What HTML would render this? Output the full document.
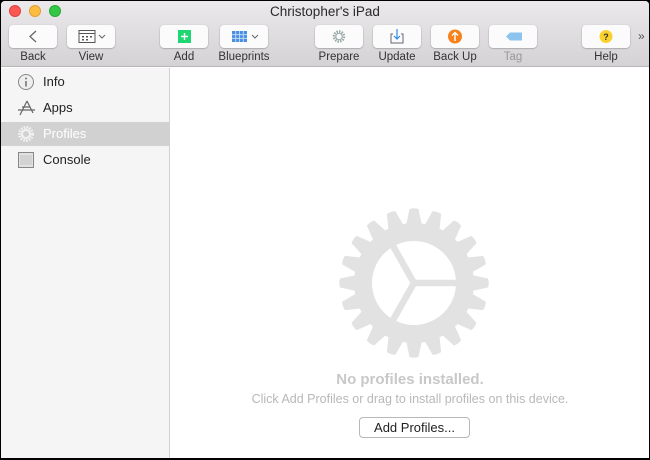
<!DOCTYPE html>
<html><head><meta charset="utf-8"><style>
*{box-sizing:border-box;margin:0;padding:0}
body{width:650px;height:460px;overflow:hidden;font-family:"Liberation Sans",sans-serif;background:#000;position:relative}
.win{position:absolute;left:1px;top:1px;width:648px;height:457px;background:#fff;overflow:hidden;border-radius:4px 4px 0 0}
.tb{position:absolute;left:0;top:0;width:648px;height:66px;background:linear-gradient(#ebe9eb,#d4d2d4);border-bottom:1px solid #b8b6b8}
.dot{position:absolute;top:4px;width:12px;height:12px;border-radius:50%}
.title{position:absolute;top:3px;left:0;width:648px;text-align:center;font-size:13.5px;color:#2a2a2a}
.btn{position:absolute;top:24px;width:48px;height:23px;background:#fbfbfb;border-radius:4px;box-shadow:0 0.5px 1.5px rgba(0,0,0,.35)}
.lbl{position:absolute;top:50px;font-size:11.5px;color:#333;text-align:center;width:80px}
.side{position:absolute;left:0;top:67px;width:169px;height:390px;background:#f5f5f5;border-right:1px solid #d0d0d0}
.row{position:absolute;left:0;width:169px;height:24px;font-size:13px;color:#222;line-height:24px;padding-left:42px}
.sel{background:#d1d1d1;color:#fff}
</style></head><body><div class="win">
<div class="tb">
<div class="dot" style="left:8px;background:#fc5753;border:0.5px solid #de4240"></div>
<div class="dot" style="left:28px;background:#fdbc40;border:0.5px solid #dea036"></div>
<div class="dot" style="left:48px;background:#33c748;border:0.5px solid #27aa35"></div>
<div class="title">Christopher's iPad</div>

<div class="btn" style="left:8px"><svg width="48" height="23"><path d="M27 6 L21 11.5 L27 17" fill="none" stroke="#666" stroke-width="1.3"/></svg></div>
<div class="lbl" style="left:-8px">Back</div>
<div class="btn" style="left:66px"><svg width="48" height="23"><rect x="12" y="5.5" width="16" height="12" fill="none" stroke="#555"/><line x1="12" y1="8.5" x2="28" y2="8.5" stroke="#555"/><g fill="#555"><rect x="15" y="11" width="2" height="1.5"/><rect x="19" y="11" width="2" height="1.5"/><rect x="23" y="11" width="2" height="1.5"/><rect x="15" y="14" width="2" height="1.5"/><rect x="19" y="14" width="2" height="1.5"/></g><path d="M32 10 L35 13 L38 10" fill="none" stroke="#666"/></svg></div>
<div class="lbl" style="left:50px">View</div>
<div class="btn" style="left:159px"><svg width="48" height="23"><rect x="18" y="5" width="13" height="13" fill="#1ed773"/><path d="M24.5 8v7M21 11.5h7" stroke="#fff" stroke-width="1.4"/></svg></div>
<div class="lbl" style="left:143px">Add</div>
<div class="btn" style="left:219px"><svg width="48" height="23"><rect x="12" y="6" width="15" height="11" fill="#4a90e2"/><g stroke="#cfe3fa" stroke-width="0.8"><path d="M12 9.7h15M12 13.3h15M15.75 6v11M19.5 6v11M23.25 6v11"/></g><path d="M32 10 L35 13 L38 10" fill="none" stroke="#666"/></svg></div>
<div class="lbl" style="left:203px">Blueprints</div>
<div class="btn" style="left:314px"><svg width="48" height="23"><circle cx="24" cy="11.5" r="5" fill="none" stroke="#9aa" stroke-width="2.5" stroke-dasharray="1.5 1.1"/><circle cx="24" cy="11.5" r="3.2" fill="none" stroke="#9aa"/></svg></div>
<div class="lbl" style="left:298px">Prepare</div>
<div class="btn" style="left:372px"><svg width="48" height="23"><path d="M20 9h-2v9h12V9h-2" fill="none" stroke="#667"/><path d="M24 4v10M21 11l3 3 3-3" fill="none" stroke="#2e8ae6" stroke-width="1.2"/></svg></div>
<div class="lbl" style="left:356px">Update</div>
<div class="btn" style="left:430px"><svg width="48" height="23"><circle cx="24" cy="11.5" r="7" fill="#f7821b"/><path d="M24 16V7.5M21 10.5l3-3 3 3" fill="none" stroke="#fff" stroke-width="1.4"/></svg></div>
<div class="lbl" style="left:414px">Back Up</div>
<div class="btn" style="left:488px"><svg width="48" height="23"><path d="M17 11.5l4-4h12v8H21z" fill="#8cc4ef"/></svg></div>
<div class="lbl" style="left:472px;color:#999">Tag</div>
<div class="btn" style="left:581px"><svg width="48" height="23"><circle cx="24" cy="11.5" r="6.5" fill="#fbd22c"/><text x="24" y="15" font-size="9" font-weight="bold" text-anchor="middle" fill="#333" font-family="Liberation Sans">?</text></svg></div>
<div class="lbl" style="left:565px">Help</div>
<div style="position:absolute;left:637px;top:28px;font-size:12px;color:#555">»</div>
</div>

<div class="side">
<div class="row" style="top:2px"><svg style="position:absolute;left:16px;top:3px" width="18" height="18"><circle cx="9" cy="9" r="7.5" fill="#eee" stroke="#888"/><circle cx="9" cy="5.5" r="1" fill="#777"/><path d="M9 8v5.5" stroke="#777" stroke-width="1.6"/></svg>Info</div>
<div class="row" style="top:28px"><svg style="position:absolute;left:15px;top:3px" width="20" height="18"><path d="M4 16L11 2M11 2L17 14M2 11h17M6 8h8" fill="none" stroke="#666" stroke-width="1.2"/></svg>Apps</div>
<div class="row sel" style="top:54px"><svg style="position:absolute;left:16px;top:3px" width="18" height="18"><circle cx="9" cy="9" r="6.5" fill="none" stroke="#f2f2f2" stroke-width="3" stroke-dasharray="1.6 1.2"/><circle cx="9" cy="9" r="5" fill="#f2f2f2"/><circle cx="9" cy="9" r="3" fill="#d1d1d1"/></svg>Profiles</div>
<div class="row" style="top:80px"><svg style="position:absolute;left:16px;top:3px" width="18" height="18"><rect x="1.5" y="1.5" width="15" height="15" fill="#e2e2e2" stroke="#888"/><g stroke="#bbb" stroke-width="0.7"><path d="M3 5h12M3 7h12M3 9h12M3 11h12M3 13h12"/></g></svg>Console</div>
</div>

<svg style="position:absolute;left:337px;top:206px" width="152" height="152" viewBox="-76 -76 152 152">
<g fill="#e2e2e2">
<circle r="60"/>
<g id="t"><path d="M-4.5 -74 Q0 -75.5 4.5 -74 L8.5 -55 L-8.5 -55 Z"/></g>
<use href="#t" transform="rotate(18)"/><use href="#t" transform="rotate(36)"/><use href="#t" transform="rotate(54)"/><use href="#t" transform="rotate(72)"/><use href="#t" transform="rotate(90)"/><use href="#t" transform="rotate(108)"/><use href="#t" transform="rotate(126)"/><use href="#t" transform="rotate(144)"/><use href="#t" transform="rotate(162)"/><use href="#t" transform="rotate(180)"/><use href="#t" transform="rotate(198)"/><use href="#t" transform="rotate(216)"/><use href="#t" transform="rotate(234)"/><use href="#t" transform="rotate(252)"/><use href="#t" transform="rotate(270)"/><use href="#t" transform="rotate(288)"/><use href="#t" transform="rotate(306)"/><use href="#t" transform="rotate(324)"/><use href="#t" transform="rotate(342)"/>
</g>
<circle r="42" fill="#fff"/>
<g stroke="#e2e2e2" stroke-width="6.5" stroke-linecap="round"><path d="M0 0L42 0M0 0L-21 -37M0 0L-21 37"/></g>
</svg>

<div style="position:absolute;left:170px;top:370px;width:478px;text-align:center;font-size:15px;font-weight:bold;color:#c8c8c8">No profiles installed.</div>
<div style="position:absolute;left:170px;top:391px;width:478px;text-align:center;font-size:12.5px;color:#b8b8b8">Click Add Profiles or drag to install profiles on this device.</div>
<div style="position:absolute;left:358px;top:416px;width:111px;height:21px;border:1px solid #b8b8b8;border-radius:4px;background:#fff;font-size:13px;color:#222;text-align:center;line-height:19px">Add Profiles...</div>
</div></body></html>
